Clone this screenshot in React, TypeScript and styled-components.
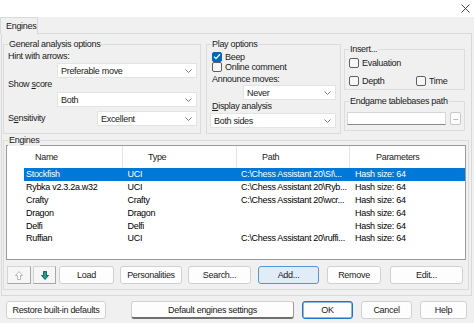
import React from 'react';
import styled, { createGlobalStyle } from 'styled-components';

const GlobalStyle = createGlobalStyle`
  html, body {
    margin: 0;
    padding: 0;
    background: #f0f0f0;
  }
  * {
    box-sizing: border-box;
  }
`;

const WINDOW = styled.div`
  width: 474px;
  height: 323px;
  overflow: hidden;
  display: flex;
  flex-direction: column;
  background: #f0f0f0;
  font-family: "Liberation Sans", Arial, sans-serif;
  font-size: 9px;
  letter-spacing: -0.3px;
  color: #1a1a1a;
`;

const TITLE_BAR = styled.div`
  height: 17px;
  background: #fff;
  display: flex;
  justify-content: flex-end;
  align-items: center;
  padding-right: 4px;
`;

const TAB_STRIP = styled.div`
  height: 16px;
  display: flex;
  align-items: flex-end;
`;

const TAB = styled.div`
  position: relative;
  z-index: 1;
  width: 38px;
  height: 17px;
  margin-bottom: -1px;
  padding: 3px 0 0 5px;
  background: #f0f0f0;
  border: 1px solid #d9d9d9;
  border-bottom: none;
  line-height: 11px;
`;

const PAGE = styled.div`
  margin-left: 1px;
  width: 471px;
  height: 263px;
  border: 1px solid #d9d9d9;
  padding-left: 1px;
  display: flex;
  flex-direction: column;
`;

const TOP_ROW = styled.div`
  display: flex;
  align-items: flex-start;
  padding-top: 10px;
`;

const GROUP = styled.div<{ $w: number; $h: number; $ml?: number; $mt?: number; $pl?: number }>`
  position: relative;
  width: ${p => p.$w}px;
  height: ${p => p.$h}px;
  margin-left: ${p => p.$ml || 0}px;
  margin-top: ${p => p.$mt || 0}px;
  padding-left: ${p => p.$pl ?? 4}px;
  border: 1px solid #dcdcdc;
  display: flex;
  flex-direction: column;
`;

const LEGEND = styled.span`
  position: absolute;
  top: -6px;
  left: 4px;
  padding: 0 1px;
  background: #f0f0f0;
  line-height: 11px;
  white-space: nowrap;
`;

const COLUMN = styled.div`
  display: flex;
  flex-direction: column;
  margin-left: 3px;
  width: 121px;
`;

const LABEL = styled.div<{ $mt?: number; $w?: number }>`
  height: 11px;
  line-height: 11px;
  margin-top: ${p => p.$mt || 0}px;
  width: ${p => (p.$w ? `${p.$w}px` : 'auto')};
  flex: none;
  white-space: nowrap;
`;

const FIELD_ROW = styled.div<{ $mt?: number }>`
  display: flex;
  align-items: center;
  margin-top: ${p => p.$mt || 0}px;
`;

const SELECT = styled.div<{ $w: number; $ml?: number; $mt?: number }>`
  width: ${p => p.$w}px;
  height: 15px;
  margin-left: ${p => p.$ml || 0}px;
  margin-top: ${p => p.$mt || 0}px;
  padding: 0 4px 0 3px;
  background: #fff;
  border: 1px solid #e3e3e3;
  display: flex;
  align-items: center;
  justify-content: space-between;
  flex: none;
  white-space: nowrap;
`;

const CHECK_ROW = styled.div<{ $mt?: number; $h?: number }>`
  display: flex;
  align-items: center;
  height: ${p => p.$h || 11}px;
  margin-top: ${p => p.$mt || 0}px;
`;

const CHECK_ITEM = styled.div<{ $w?: number }>`
  display: flex;
  align-items: center;
  gap: 3px;
  width: ${p => (p.$w ? `${p.$w}px` : 'auto')};
  white-space: nowrap;
`;

const BOX = styled.span<{ $on?: boolean }>`
  width: 10px;
  height: 10px;
  border-radius: 2px;
  border: 1px solid ${p => (p.$on ? '#0067c0' : '#5f5f5f')};
  background: ${p => (p.$on ? '#0067c0' : '#f7f7f7')};
  display: inline-flex;
  align-items: center;
  justify-content: center;
  flex: none;
`;

const PATH_ROW = styled.div`
  display: flex;
  align-items: center;
  margin-top: 10px;
  padding-left: 2px;
`;

const TEXT_INPUT = styled.div`
  width: 99px;
  height: 13px;
  background: #fff;
  border: 1px solid #d6d6d6;
  border-bottom-color: #8a8a8a;
`;

const DOTS = styled.div`
  width: 11px;
  height: 13px;
  margin-left: 4px;
  border: 1px solid #c8c8c8;
  border-radius: 2px;
  background: #fbfbfb;
  font-size: 7px;
  line-height: 9px;
  text-align: center;
  color: #333;
`;

const LIST = styled.div`
  width: 460px;
  height: 115px;
  background: #fff;
  border: 1px solid #9a9a9a;
  display: flex;
  flex-direction: column;
`;

const HEADER = styled.div`
  display: grid;
  grid-template-columns: 116px 114px 113px 1fr;
  height: 22px;
  flex: none;
`;

const HEAD_CELL = styled.div<{ $pl?: number }>`
  display: flex;
  align-items: center;
  padding-left: ${p => p.$pl || 25}px;
  border-right: 1px solid #e5e5e5;
  color: #222;
  &:last-child {
    border-right: none;
  }
`;

const ROW = styled.div`
  display: flex;
  height: 12.8px;
  flex: none;
`;

const INDENT = styled.div`
  width: 17px;
  flex: none;
`;

const ROW_CELLS = styled.div<{ $sel?: boolean }>`
  flex: 1;
  display: grid;
  grid-template-columns: 99px 114px 113px 1fr;
  align-items: center;
  background: ${p => (p.$sel ? '#0078d7' : 'transparent')};
  color: ${p => (p.$sel ? '#fff' : '#000')};
`;

const CELL = styled.div<{ $pl?: number }>`
  padding-left: ${p => p.$pl ?? 4}px;
  white-space: nowrap;
  overflow: hidden;
  line-height: 12px;
`;

const BUTTON_ROW = styled.div<{ $mt?: number }>`
  display: flex;
  align-items: center;
  margin-top: ${p => p.$mt || 0}px;
`;

type BtnKind = 'normal' | 'hot' | 'default' | 'raised' | 'square';

const BUTTON = styled.div<{ $w: number; $ml?: number; $kind?: BtnKind }>`
  width: ${p => p.$w}px;
  height: 18px;
  margin-left: ${p => p.$ml || 0}px;
  flex: none;
  display: flex;
  align-items: center;
  justify-content: center;
  white-space: nowrap;
  border-radius: ${p => (p.$kind === 'square' ? 0 : 3)}px;
  background: ${p =>
    p.$kind === 'hot' ? '#e0ecf8' : p.$kind === 'square' ? '#f6f6f6' : '#fdfdfd'};
  border: 1px solid
    ${p => (p.$kind === 'hot' ? '#4d97dc' : p.$kind === 'default' ? '#1c74c9' : '#d0d0d0')};
  ${p => (p.$kind === 'raised' ? 'border-bottom: 2px solid #6f6f6f; border-right-color: #9a9a9a;' : '')}
  ${p => (p.$kind === 'square' ? 'border-color: #d4d4d4 #a8a8a8 #a8a8a8 #d4d4d4;' : '')}
  ${p => (p.$kind === 'default' ? 'box-shadow: inset 0 0 0 0.5px #1c74c9;' : '')}
  color: #1a1a1a;
`;

const BOTTOM_ROW = styled.div`
  display: flex;
  align-items: center;
  margin-top: 5px;
`;

const Chevron = () => (
  <svg width="7" height="4" viewBox="0 0 7 4">
    <polyline points="0.5,0.5 3.5,3.5 6.5,0.5" fill="none" stroke="#707070" strokeWidth="0.9" />
  </svg>
);

const Check = ({ on }: { on?: boolean }) => (
  <BOX $on={on}>
    {on && (
      <svg width="8" height="7" viewBox="0 0 8 7">
        <polyline points="1,3.6 3,5.6 7,1.2" fill="none" stroke="#fff" strokeWidth="1.3" />
      </svg>
    )}
  </BOX>
);

const ArrowUp = () => (
  <svg width="8" height="9" viewBox="0 0 8 9">
    <path d="M4 0.5 L7.5 4.5 H5.5 V8.5 H2.5 V4.5 H0.5 Z" fill="#fff" stroke="#a8a8a8" strokeWidth="0.8" />
  </svg>
);

const ArrowDown = () => (
  <svg width="8" height="9" viewBox="0 0 8 9">
    <path d="M4 8.5 L7.5 4.5 H5.5 V0.5 H2.5 V4.5 H0.5 Z" fill="#13a58f" stroke="#123c36" strokeWidth="0.8" />
  </svg>
);

const engines = [
  { name: 'Stockfish', type: 'UCI', path: 'C:\\Chess Assistant 20\\SI\\...', params: 'Hash size: 64', sel: true },
  { name: 'Rybka v2.3.2a.w32', type: 'UCI', path: 'C:\\Chess Assistant 20\\Ryb...', params: 'Hash size: 64' },
  { name: 'Crafty', type: 'Crafty', path: 'C:\\Chess Assistant 20\\wcr...', params: 'Hash size: 64' },
  { name: 'Dragon', type: 'Dragon', path: '', params: 'Hash size: 64' },
  { name: 'Delfi', type: 'Delfi', path: '', params: 'Hash size: 64' },
  { name: 'Ruffian', type: 'UCI', path: 'C:\\Chess Assistant 20\\ruffi...', params: 'Hash size: 64' },
];

const App: React.FC = () => {
  return (
    <WINDOW>
      <GlobalStyle />
      <TITLE_BAR>
        <svg width="9" height="9" viewBox="0 0 9 9">
          <path d="M0.5 0.5 L8.5 8.5 M8.5 0.5 L0.5 8.5" stroke="#333" strokeWidth="0.9" />
        </svg>
      </TITLE_BAR>
      <TAB_STRIP>
        <TAB>Engines</TAB>
      </TAB_STRIP>
      <PAGE>
        <TOP_ROW>
          <GROUP $w={198} $h={90}>
            <LEGEND>General analysis options</LEGEND>
            <LABEL $mt={5.5}>Hint with arrows:</LABEL>
            <SELECT $w={140} $ml={49} $mt={1.5}>
              Preferable move <Chevron />
            </SELECT>
            <LABEL $mt={0.5}>
              Show <u>s</u>core
            </LABEL>
            <SELECT $w={140} $ml={49} $mt={2.5}>
              Both <Chevron />
            </SELECT>
            <FIELD_ROW $mt={4}>
              <LABEL $w={89}>
                S<u>e</u>nsitivity
              </LABEL>
              <SELECT $w={100}>
                Excellent <Chevron />
              </SELECT>
            </FIELD_ROW>
          </GROUP>

          <GROUP $w={135} $h={90} $ml={5} $pl={5}>
            <LEGEND>Play options</LEGEND>
            <CHECK_ROW $mt={6.5} $h={10.5}>
              <CHECK_ITEM>
                <Check on />
                Beep
              </CHECK_ITEM>
            </CHECK_ROW>
            <CHECK_ROW $h={10.5}>
              <CHECK_ITEM>
                <Check />
                Online comment
              </CHECK_ITEM>
            </CHECK_ROW>
            <LABEL $mt={1.5}>Announce moves:</LABEL>
            <SELECT $w={93} $ml={31}>
              Never <Chevron />
            </SELECT>
            <LABEL $mt={0.5}>
              <u>D</u>isplay analysis
            </LABEL>
            <SELECT $w={126} $ml={-2} $mt={1.5}>
              Both sides <Chevron />
            </SELECT>
          </GROUP>

          <COLUMN>
            <GROUP $w={121} $h={41} $mt={5}>
              <LEGEND>Insert...</LEGEND>
              <CHECK_ROW $mt={7.5}>
                <CHECK_ITEM>
                  <Check />
                  Evaluation
                </CHECK_ITEM>
              </CHECK_ROW>
              <CHECK_ROW $mt={7}>
                <CHECK_ITEM $w={67}>
                  <Check />
                  Depth
                </CHECK_ITEM>
                <CHECK_ITEM>
                  <Check />
                  Time
                </CHECK_ITEM>
              </CHECK_ROW>
            </GROUP>
            <GROUP $w={121} $h={30} $mt={11} $pl={0}>
              <LEGEND>Endgame tablebases path</LEGEND>
              <PATH_ROW>
                <TEXT_INPUT />
                <DOTS>...</DOTS>
              </PATH_ROW>
            </GROUP>
          </COLUMN>
        </TOP_ROW>

        <GROUP $w={466} $h={150} $mt={6} $pl={2}>
          <LEGEND>Engines</LEGEND>
          <LIST style={{ marginTop: 4 }}>
            <HEADER>
              <HEAD_CELL $pl={28}>Name</HEAD_CELL>
              <HEAD_CELL>Type</HEAD_CELL>
              <HEAD_CELL>Path</HEAD_CELL>
              <HEAD_CELL $pl={26}>Parameters</HEAD_CELL>
            </HEADER>
            {engines.map(e => (
              <ROW key={e.name}>
                <INDENT />
                <ROW_CELLS $sel={e.sel}>
                  <CELL $pl={2}>{e.name}</CELL>
                  <CELL $pl={4.5}>{e.type}</CELL>
                  <CELL>{e.path}</CELL>
                  <CELL $pl={5}>{e.params}</CELL>
                </ROW_CELLS>
              </ROW>
            ))}
          </LIST>
          <BUTTON_ROW $mt={6}>
            <BUTTON $w={24} $ml={1} $kind="square">
              <ArrowUp />
            </BUTTON>
            <BUTTON $w={23} $ml={2} $kind="square">
              <ArrowDown />
            </BUTTON>
            <BUTTON $w={55} $ml={3}>Load</BUTTON>
            <BUTTON $w={62} $ml={6}>Personalities</BUTTON>
            <BUTTON $w={63} $ml={6}>Search...</BUTTON>
            <BUTTON $w={61} $ml={7} $kind="hot">Add...</BUTTON>
            <BUTTON $w={54} $ml={8}>Remove</BUTTON>
            <BUTTON $w={73} $ml={9}>Edit...</BUTTON>
          </BUTTON_ROW>
        </GROUP>
      </PAGE>

      <BOTTOM_ROW>
        <BUTTON $w={100} $ml={6}>Restore built-in defaults</BUTTON>
        <BUTTON $w={163} $ml={25} $kind="raised">Default engines settings</BUTTON>
        <BUTTON $w={51} $ml={8} $kind="default">OK</BUTTON>
        <BUTTON $w={51} $ml={8}>Cancel</BUTTON>
        <BUTTON $w={47} $ml={8}>Help</BUTTON>
      </BOTTOM_ROW>
    </WINDOW>
  );
};

export default App;
